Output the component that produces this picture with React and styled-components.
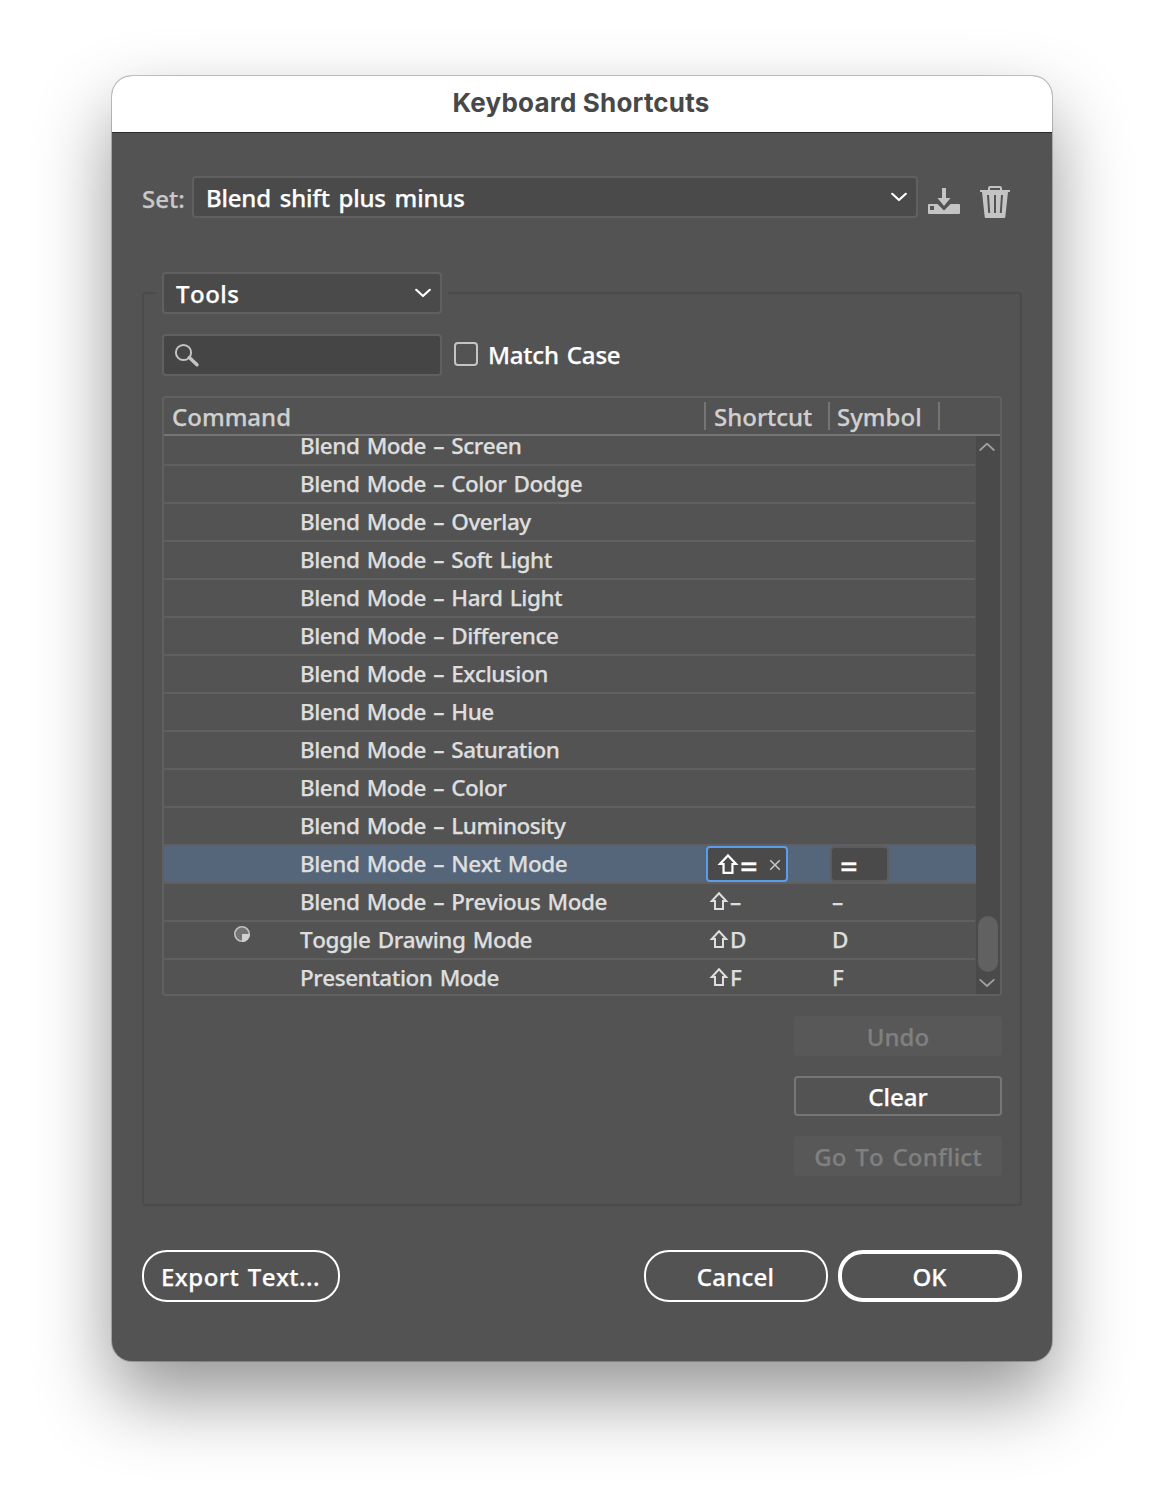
import React from "react";
import styled, { createGlobalStyle } from "styled-components";

const Global = createGlobalStyle`
  * { box-sizing: border-box; }
  body {
    margin: 0;
    background: #fff;
    font-family: "Noto Sans", "Open Sans", sans-serif;
    font-weight: 500;
    font-kerning: none;
  }
  button { font-family: inherit; font-weight: inherit; font-kerning: inherit; }
`;

const Stage = styled.main`
  width: 1164px;
  height: 1510px;
  overflow: hidden;
  padding: 76px 112px 0;
`;

const Dialog = styled.section`
  width: 940px;
  height: 1285px;
  border-radius: 20px;
  overflow: hidden;
  display: flex;
  flex-direction: column;
  background: #535353;
  box-shadow: 0 0 0 1px rgba(0, 0, 0, 0.22), 0 36px 76px rgba(0, 0, 0, 0.42);
`;

const TitleBar = styled.header`
  height: 57px;
  flex: none;
  background: #fff;
  border-bottom: 1px solid #2b2b2b;
  display: flex;
  justify-content: center;
  padding-right: 2px;
`;

const Title = styled.h1`
  margin: 0;
  font: 700 26px/54px Inter, sans-serif;
  letter-spacing: 0.2px;
  font-kerning: auto;
  color: #484848;
`;

const Content = styled.div`
  padding: 43px 30px 0;
  display: flex;
  flex-direction: column;
`;

const Text = styled.span`
  font-size: ${(p) => p.$size || 24}px;
  line-height: ${(p) => p.$lh || 38}px;
  letter-spacing: ${(p) => p.$ls || 0}px;
  word-spacing: ${(p) => p.$ws || 0}px;
  color: ${(p) => p.$color || "#fff"};
  -webkit-text-stroke: 0.25px currentColor;
  white-space: nowrap;
`;

const SetRow = styled.div`
  display: flex;
  height: 42px;
`;

const SetLabel = styled(Text)`
  width: 50px;
  line-height: 46px;
`;

const Select = styled.div`
  width: ${(p) => p.$w}px;
  height: 42px;
  border: 2px solid #606060;
  border-radius: 4px;
  background: #4a4a4a;
  display: flex;
  justify-content: space-between;
  padding: 0 9px 0 12px;
`;

const IconButton = styled.button`
  border: 0;
  padding: 0;
  background: none;
  width: 32px;
  height: 42px;
  margin-left: ${(p) => p.$ml}px;
  svg { display: block; }
`;

const Group = styled.div`
  margin-top: 74px;
  height: 914px;
  border: 2px solid #4b4b4b;
  border-radius: 4px;
  padding: 0 18px;
  display: flex;
  flex-direction: column;
`;

const Legend = styled.div`
  margin: -22px 0 0 -6px;
  padding: 0 6px;
  align-self: flex-start;
  background: #535353;
`;

const SearchRow = styled.div`
  margin-top: 20px;
  display: flex;
  height: 42px;
`;

const SearchField = styled.div`
  width: 280px;
  border: 2px solid #606060;
  border-radius: 4px;
  background: #454545;
  padding: 7px 10px;
`;

const Checkbox = styled.span`
  width: 24px;
  height: 24px;
  margin: 8px 10px 0 12px;
  border: 2px solid #c4c4c4;
  border-radius: 4px;
`;

const Table = styled.div`
  margin-top: 20px;
  height: 600px;
  border: 2px solid #606060;
  border-radius: 4px;
  overflow: hidden;
  display: flex;
  flex-direction: column;
`;

const TableHead = styled.div`
  display: flex;
  height: 38px;
  flex: none;
  border-bottom: 2px solid #757575;
`;

const HeadCell = styled.div`
  width: ${(p) => p.$w}px;
  height: 28px;
  margin-top: 4px;
  padding: 2px 0 0 ${(p) => p.$pl || 8}px;
  border-right: 2px solid #757575;
  display: flex;
  align-items: center;
`;

const TableBody = styled.div`
  display: flex;
  height: 558px;
`;

const Rows = styled.div`
  width: 812px;
  overflow: hidden;
  & > :first-child { margin-top: -8px; }
`;

const Row = styled.div`
  height: 38px;
  width: ${(p) => (p.$selected ? 812 : 811)}px;
  border-bottom: 2px solid #606060;
  background: ${(p) => (p.$selected ? "#55667b" : "transparent")};
  display: grid;
  grid-template-columns: 136px 406px 122px 1fr;
`;

const ToolCell = styled.div`
  padding: 3px 0 0 69px;
  svg { display: block; }
`;

const Keys = styled.div`
  display: flex;
  align-items: flex-start;
  padding-left: 4px;
  gap: 2px;
  height: 36px;
  svg { margin-top: 8px; }
`;

const KeyInput = styled.div`
  width: 82px;
  height: 36px;
  border: 2px solid #5b9cec;
  border-radius: 4px;
  background: #4a4a4a;
  display: flex;
  align-items: center;
  gap: 2px;
  padding: 0 5px 0 10px;
`;

const SymbolInput = styled.div`
  width: 59px;
  height: 36px;
  margin-left: 2px;
  border: 2px solid #5a5c5f;
  border-radius: 5px;
  background: #4a4a4a;
  padding-left: 8px;
  display: flex;
  align-items: center;
`;

const InputText = styled(Text)`
  font-size: 31px;
  line-height: 28px;
  padding-top: 4px;
`;

const ClearMark = styled.svg`
  margin: 2px 0 0 auto;
`;

const Scrollbar = styled.div`
  width: 24px;
  background: #4a4a4a;
  display: flex;
  flex-direction: column;
  align-items: center;
  padding: 6px 2px 6px 0;
`;

const Thumb = styled.div`
  width: 20px;
  height: 56px;
  border-radius: 10px;
  background: #616161;
  margin: auto 0 6px 2px;
`;

const Actions = styled.div`
  margin-top: 20px;
  display: flex;
  flex-direction: column;
  align-items: flex-end;
  gap: 20px;
`;

const ActionButton = styled.button`
  width: 208px;
  height: 40px;
  padding: 0;
  border: 2px solid ${(p) => (p.disabled ? "#585858" : "#767676")};
  border-radius: 4px;
  background: ${(p) => (p.disabled ? "#585858" : "transparent")};
  text-align: center;
`;

const Footer = styled.footer`
  margin-top: 44px;
  display: flex;
  gap: 10px;
`;

const PillButton = styled.button`
  width: ${(p) => p.$w}px;
  height: 52px;
  padding: 1px 1px 0 0;
  border: ${(p) => (p.$primary ? 4 : 2)}px solid #fff;
  border-radius: 25px;
  background: transparent;
  margin-right: ${(p) => (p.$push ? "auto" : 0)};
`;

const SelectArrow = styled.svg`
  margin-top: 14px;
`;

const Chevron = ({ color = "#fff", up, width = 2.2, as: Tag = "svg" }) => (
  <Tag width="16" height="10" viewBox="0 0 16 10" fill="none">
    <path
      d={up ? "M1.2 8 8 1.7 14.8 8" : "M1.2 1.8 8 8 14.8 1.8"}
      stroke={color}
      strokeWidth={width}
      strokeLinecap="round"
      strokeLinejoin="round"
    />
  </Tag>
);

const ShiftArrow = styled.svg`
  flex: none;
  overflow: visible;
`;

const Shift = ({ size = 18, color = "#dedede" }) => (
  <ShiftArrow width={size} height={size} viewBox="0 0 18 18" fill="none">
    <path d="M9 1.3 16.2 9H13V17H5V9H1.8Z" stroke={color} strokeWidth="2" />
  </ShiftArrow>
);

const SaveIcon = () => (
  <svg width="32" height="42" viewBox="0 0 32 42">
    <path
      fill="#c4c4c4"
      fillRule="evenodd"
      d="M1 28H9.5L16 34.5 22.5 28H31a1 1 0 0 1 1 1V37a1 1 0 0 1-1 1H1a1 1 0 0 1-1-1V29a1 1 0 0 1 1-1ZM2 30V34H6V30Z"
    />
    <path fill="#c4c4c4" d="M14 12H18V22H22.5L16 30 9.5 22H14Z" />
  </svg>
);

const TrashIcon = () => (
  <svg width="32" height="42" viewBox="0 0 32 42" fill="none">
    <path d="M9 14V12.2Q9 11 10.2 11H19.8Q21 11 21 12.2V14" stroke="#c4c4c4" strokeWidth="2" />
    <path d="M0 14H30V16H28L25.3 41Q25.2 42 24.2 42H5.8Q4.8 42 4.7 41L2 16H0Z" fill="#c4c4c4" />
    <path d="M8 19 9.2 37M15 19V37M22 19 20.8 37" stroke="#535353" strokeWidth="2" />
  </svg>
);

const SearchIcon = () => (
  <svg width="26" height="26" viewBox="0 0 26 26" fill="none">
    <circle cx="9.5" cy="9.5" r="7.6" stroke="#c4c4c4" strokeWidth="2" />
    <path d="M15.3 14.5 23 21.8" stroke="#c4c4c4" strokeWidth="3.4" strokeLinecap="round" />
  </svg>
);

const DrawingModeIcon = () => (
  <svg width="18" height="18" viewBox="0 0 18 18">
    <circle cx="9" cy="9" r="7.2" fill="#737373" stroke="#c0c0c0" strokeWidth="1.6" />
    <path d="M9 9H17A8 8 0 0 1 9 17Z" fill="#d0d0d0" />
  </svg>
);

const commands = [
  { name: "Blend Mode – Screen" },
  { name: "Blend Mode – Color Dodge" },
  { name: "Blend Mode – Overlay" },
  { name: "Blend Mode – Soft Light" },
  { name: "Blend Mode – Hard Light" },
  { name: "Blend Mode – Difference" },
  { name: "Blend Mode – Exclusion" },
  { name: "Blend Mode – Hue" },
  { name: "Blend Mode – Saturation" },
  { name: "Blend Mode – Color" },
  { name: "Blend Mode – Luminosity" },
  { name: "Blend Mode – Next Mode", symbol: "=", selected: true },
  { name: "Blend Mode – Previous Mode", symbol: "–" },
  { name: "Toggle Drawing Mode", symbol: "D", icon: true },
  { name: "Presentation Mode", symbol: "F" },
];

const RowText = (props) => (
  <Text $size={22.5} $lh={35} $ls={-0.48} $ws={1.9} $color="#dedede" {...props} />
);

const ShortcutCells = ({ symbol, selected }) => {
  if (!symbol) return null;
  if (selected)
    return (
      <>
        <KeyInput>
          <Shift size={20} color="#fff" />
          <InputText>{symbol}</InputText>
          <ClearMark width="12" height="12" viewBox="0 0 12 12">
            <path d="M1.2 1.2 10.8 10.8M10.8 1.2 1.2 10.8" stroke="#c4c4c4" strokeWidth="1.6" />
          </ClearMark>
        </KeyInput>
        <SymbolInput>
          <InputText>{symbol}</InputText>
        </SymbolInput>
      </>
    );
  return (
    <>
      <Keys>
        <Shift />
        <RowText>{symbol}</RowText>
      </Keys>
      <Keys>
        <RowText>{symbol}</RowText>
      </Keys>
    </>
  );
};

export default function App() {
  return (
    <Stage>
      <Global />
      <Dialog>
        <TitleBar>
          <Title>Keyboard Shortcuts</Title>
        </TitleBar>
        <Content>
          <SetRow>
            <SetLabel $color="#c8c8c8">Set:</SetLabel>
            <Select $w={726}>
              <Text $lh={40} $ls={-0.2} $ws={2.8}>Blend shift plus minus</Text>
              <Chevron as={SelectArrow} />
            </Select>
            <IconButton $ml={10} aria-label="Save set"><SaveIcon /></IconButton>
            <IconButton $ml={20} aria-label="Delete set"><TrashIcon /></IconButton>
          </SetRow>
          <Group>
            <Legend>
              <Select $w={280}>
                <Text $lh={40} $ls={0.5}>Tools</Text>
                <Chevron as={SelectArrow} />
              </Select>
            </Legend>
            <SearchRow>
              <SearchField><SearchIcon /></SearchField>
              <Checkbox />
              <Text $lh={42} $ls={-0.2} $ws={2}>Match Case</Text>
            </SearchRow>
            <Table>
              <TableHead>
                <HeadCell $w={542}><Text $color="#d0d0d0">Command</Text></HeadCell>
                <HeadCell $w={124}><Text $color="#d0d0d0">Shortcut</Text></HeadCell>
                <HeadCell $w={110} $pl={7}><Text $color="#d0d0d0">Symbol</Text></HeadCell>
              </TableHead>
              <TableBody>
                <Rows>
                  {commands.map((c) => (
                    <Row key={c.name} $selected={c.selected}>
                      <ToolCell>{c.icon && <DrawingModeIcon />}</ToolCell>
                      <RowText>{c.name}</RowText>
                      <ShortcutCells symbol={c.symbol} selected={c.selected} />
                    </Row>
                  ))}
                </Rows>
                <Scrollbar>
                  <Chevron up color="#a0a0a0" width={1.8} />
                  <Thumb />
                  <Chevron color="#a0a0a0" width={1.8} />
                </Scrollbar>
              </TableBody>
            </Table>
            <Actions>
              <ActionButton disabled><Text $lh={38} $color="#808080">Undo</Text></ActionButton>
              <ActionButton><Text $lh={38}>Clear</Text></ActionButton>
              <ActionButton disabled>
                <Text $lh={38} $ls={0.25} $ws={2} $color="#808080">Go To Conflict</Text>
              </ActionButton>
            </Actions>
          </Group>
          <Footer>
            <PillButton $w={198} $push><Text $ls={0.45} $ws={2}>Export Text...</Text></PillButton>
            <PillButton $w={184}><Text $ls={0.2}>Cancel</Text></PillButton>
            <PillButton $w={184} $primary><Text>OK</Text></PillButton>
          </Footer>
        </Content>
      </Dialog>
    </Stage>
  );
}
